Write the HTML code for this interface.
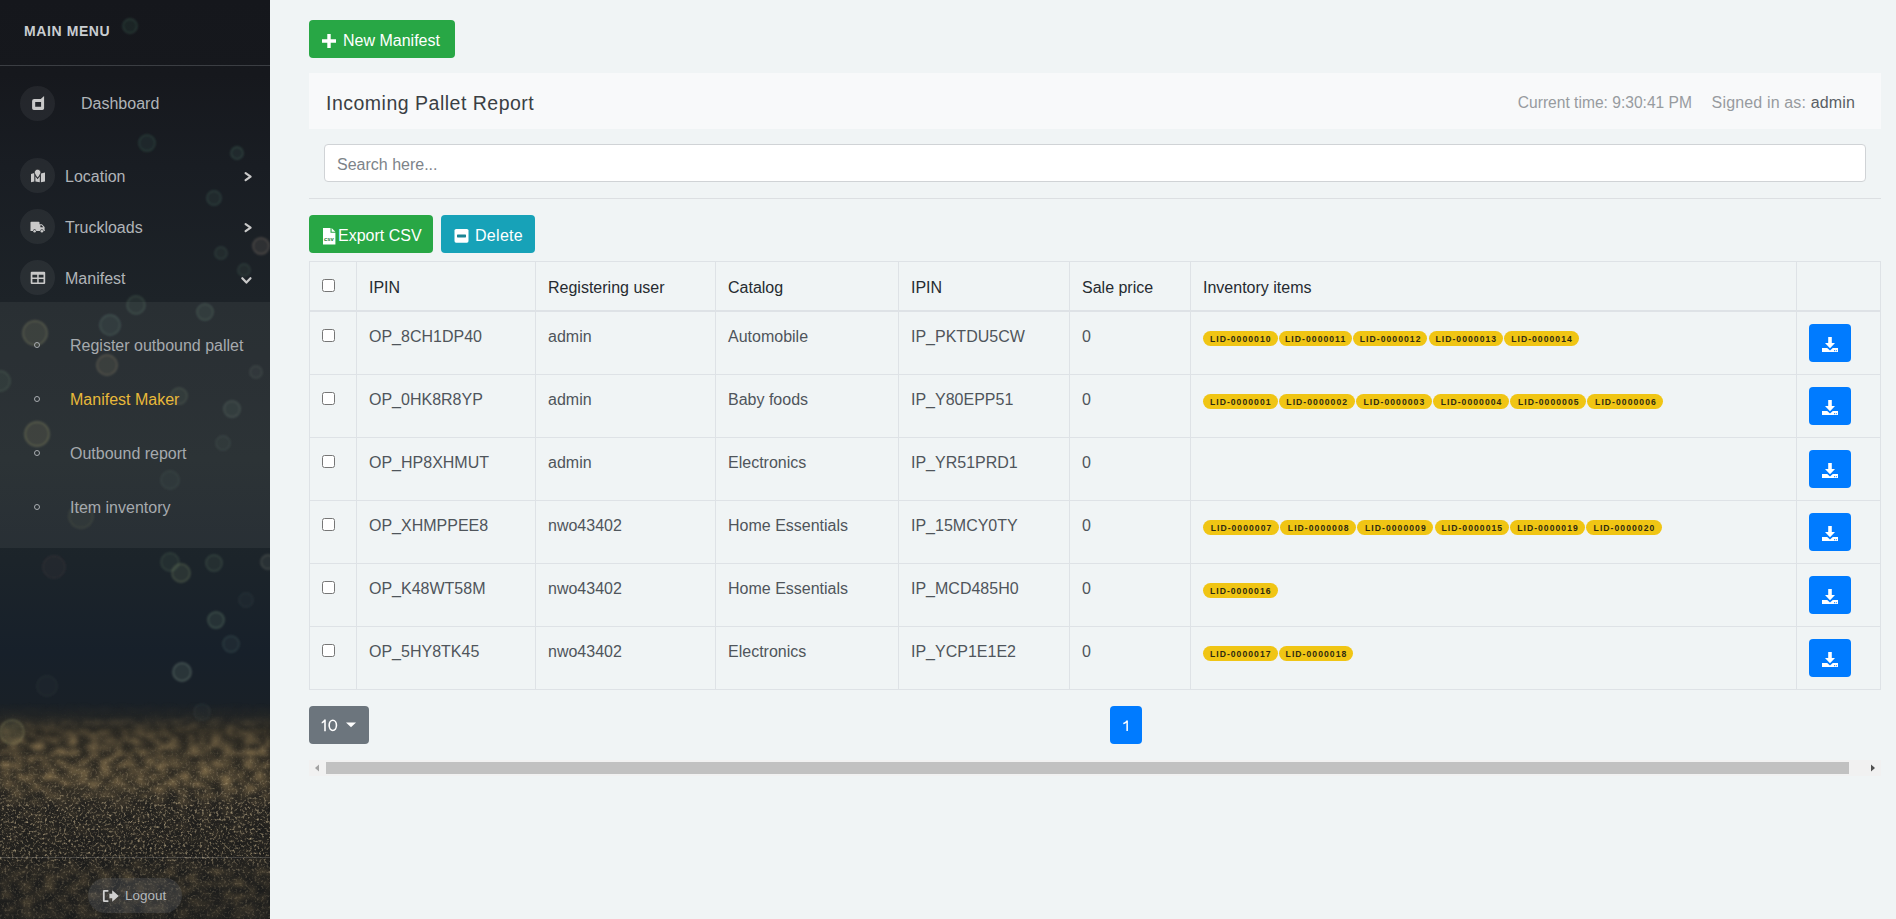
<!DOCTYPE html>
<html><head><meta charset="utf-8">
<style>
*{box-sizing:border-box;margin:0;padding:0}
html,body{width:1896px;height:919px;overflow:hidden}
body{font-family:"Liberation Sans",sans-serif;background:#f0f4f5;position:relative;color:#495057}
.abs{position:absolute}
/* sidebar */
#sb{position:absolute;left:0;top:0;width:270px;height:919px;overflow:hidden;
 background:linear-gradient(180deg,#16181d 0px,#171a1f 120px,#1a1f26 250px,#1f262d 400px,#1d252d 520px,#18202a 620px,#161d26 700px,#2a2820 760px,#3a3222 800px,#2a261e 850px,#1e1d1c 919px);}
#sb .mm{position:absolute;left:24px;top:23px;font-size:14px;font-weight:bold;color:#c9cdd1;letter-spacing:0.6px}
#sb .div1{position:absolute;left:0;top:65px;width:270px;height:1px;background:#3b3e43}
.ic{position:absolute;left:20px;width:35px;height:35px;border-radius:50%;background:rgba(255,255,255,0.06)}
.ic svg{position:absolute;left:10px;top:10px}
.it{position:absolute;font-size:16px;color:#b0b4b8}
.chev{position:absolute;left:243px}
.band{position:absolute;left:0;width:270px}
.sub{position:absolute;left:70px;font-size:16px;color:#a6aaae}
.bul{position:absolute;left:34px;width:6px;height:6px;border:1.3px solid #a9adb1;border-radius:50%}
/* main */
.btn{position:absolute;height:38px;border-radius:4px;color:#fff;font-size:16px}
.btn span{position:absolute}
#hdr{position:absolute;left:309px;top:73px;width:1572px;height:56px;background:#f8f9fa}
#search{position:absolute;left:324px;top:144px;width:1542px;height:38px;background:#fff;border:1px solid #d0d3d6;border-radius:4px}
#hr{position:absolute;left:309px;top:198px;width:1572px;height:1px;background:#dcdfe2}
table{position:absolute;left:309px;top:261px;border-collapse:collapse;table-layout:fixed}
td,th{border:1px solid #dee2e6;vertical-align:top;padding:0;position:relative;text-align:left}
th{height:49px;font-weight:normal;color:#262b30;font-size:16px;border-bottom:2px solid #dee2e6}
td{height:63px;font-size:16px;color:#4f555b}
.cb{position:absolute;left:12px;width:13px;height:13px;border:1px solid #767676;border-radius:2.5px;background:#fff}
.tx{position:absolute;left:12px;white-space:nowrap}
.bdg{display:inline-block;height:15px;border-radius:8px;background:#f0c514;color:#2e2a10;font-size:8.6px;font-weight:bold;letter-spacing:1.05px;line-height:17px;padding:0 0 0 1px;text-align:center;margin-right:1.2px;vertical-align:top}
.bdgs{position:absolute;left:12px;top:19px;white-space:nowrap;font-size:0}
.dl{position:absolute;left:12px;top:12px;width:42px;height:38px;border-radius:4px;background:#007bff}
.dl svg{position:absolute;left:12px;top:12px}
</style></head><body>

<div id="sb">
<svg style="position:absolute;left:0;top:0" width="270" height="919" viewBox="0 0 270 919">
<defs>
<linearGradient id="g0" x1="0" y1="0" x2="0" y2="1">
<stop offset="0" stop-color="#15171c"/>
<stop offset="0.08" stop-color="#16181d"/>
<stop offset="0.18" stop-color="#191d23"/>
<stop offset="0.33" stop-color="#1d2328"/>
<stop offset="0.50" stop-color="#20282b"/>
<stop offset="0.61" stop-color="#1c242a"/>
<stop offset="0.71" stop-color="#17202a"/>
<stop offset="0.765" stop-color="#192027"/>
<stop offset="0.795" stop-color="#292721"/>
<stop offset="0.845" stop-color="#2e2a22"/>
<stop offset="0.875" stop-color="#201f1d"/>
<stop offset="0.93" stop-color="#1c1c1b"/>
<stop offset="1" stop-color="#1a1b1b"/>
</linearGradient>
<filter id="bl" x="-50%" y="-50%" width="200%" height="200%"><feGaussianBlur stdDeviation="1.1"/></filter>
<filter id="nz1" x="0" y="0" width="100%" height="100%">
<feTurbulence type="fractalNoise" baseFrequency="0.09 0.16" numOctaves="2" seed="7"/>
<feColorMatrix type="matrix" values="0 0 0 0 0.43  0 0 0 0 0.29  0 0 0 0 0.12  0 0 0 1.9 -0.70"/><feGaussianBlur stdDeviation="2"/>
</filter>
<filter id="nz2" x="0" y="0" width="100%" height="100%">
<feTurbulence type="fractalNoise" baseFrequency="0.42" numOctaves="2" seed="3"/>
<feColorMatrix type="matrix" values="0 0 0 0 0.5  0 0 0 0 0.40  0 0 0 0 0.24  0 0 0 2.4 -1.22"/><feGaussianBlur stdDeviation="0.55"/>
</filter>
<linearGradient id="gm1" x1="0" y1="0" x2="0" y2="1">
<stop offset="0" stop-color="#fff" stop-opacity="0"/>
<stop offset="0.07" stop-color="#fff" stop-opacity="0.05"/>
<stop offset="0.12" stop-color="#fff" stop-opacity="0.4"/>
<stop offset="0.22" stop-color="#fff" stop-opacity="0.75"/>
<stop offset="0.38" stop-color="#fff" stop-opacity="0.85"/>
<stop offset="0.5" stop-color="#fff" stop-opacity="0.25"/>
<stop offset="0.71" stop-color="#fff" stop-opacity="0.15"/>
<stop offset="0.8" stop-color="#fff" stop-opacity="0.45"/>
<stop offset="1" stop-color="#fff" stop-opacity="0.3"/>
</linearGradient>
<linearGradient id="gm2" x1="0" y1="0" x2="0" y2="1">
<stop offset="0" stop-color="#fff" stop-opacity="0"/>
<stop offset="0.2" stop-color="#fff" stop-opacity="0.1"/>
<stop offset="0.4" stop-color="#fff" stop-opacity="0.5"/>
<stop offset="0.5" stop-color="#fff" stop-opacity="0.95"/>
<stop offset="0.7" stop-color="#fff" stop-opacity="0.9"/>
<stop offset="0.8" stop-color="#fff" stop-opacity="0.4"/>
<stop offset="1" stop-color="#fff" stop-opacity="0.3"/>
</linearGradient>
<mask id="mk1"><rect x="0" y="700" width="270" height="219" fill="url(#gm1)"/></mask>
<mask id="mk2"><rect x="0" y="700" width="270" height="219" fill="url(#gm2)"/></mask>
</defs>
<rect width="270" height="919" fill="url(#g0)"/>
<circle cx="130" cy="26" r="7" fill="#4a7a68" fill-opacity="0.13" stroke="#4a7a68" stroke-opacity="0.32" stroke-width="1.4" filter="url(#bl)"/><circle cx="147" cy="143" r="8" fill="#4a7a68" fill-opacity="0.12" stroke="#4a7a68" stroke-opacity="0.30" stroke-width="1.4" filter="url(#bl)"/><circle cx="237" cy="153" r="6" fill="#5a8a78" fill-opacity="0.12" stroke="#5a8a78" stroke-opacity="0.30" stroke-width="1.4" filter="url(#bl)"/><circle cx="214" cy="198" r="7" fill="#5a8a78" fill-opacity="0.11" stroke="#5a8a78" stroke-opacity="0.28" stroke-width="1.4" filter="url(#bl)"/><circle cx="261" cy="246" r="8" fill="#a09080" fill-opacity="0.14" stroke="#a09080" stroke-opacity="0.35" stroke-width="1.4" filter="url(#bl)"/><circle cx="221" cy="253" r="6" fill="#5a8070" fill-opacity="0.10" stroke="#5a8070" stroke-opacity="0.25" stroke-width="1.4" filter="url(#bl)"/><circle cx="244" cy="270" r="6" fill="#5a8070" fill-opacity="0.10" stroke="#5a8070" stroke-opacity="0.25" stroke-width="1.4" filter="url(#bl)"/><circle cx="205" cy="312" r="8" fill="#6a9078" fill-opacity="0.12" stroke="#6a9078" stroke-opacity="0.30" stroke-width="1.4" filter="url(#bl)"/><circle cx="136" cy="305" r="9" fill="#6a9078" fill-opacity="0.11" stroke="#6a9078" stroke-opacity="0.28" stroke-width="1.4" filter="url(#bl)"/><circle cx="35" cy="333" r="12" fill="#a0a070" fill-opacity="0.14" stroke="#a0a070" stroke-opacity="0.35" stroke-width="1.4" filter="url(#bl)"/><circle cx="110" cy="325" r="10" fill="#6a9080" fill-opacity="0.12" stroke="#6a9080" stroke-opacity="0.30" stroke-width="1.4" filter="url(#bl)"/><circle cx="107" cy="365" r="10" fill="#a09070" fill-opacity="0.13" stroke="#a09070" stroke-opacity="0.32" stroke-width="1.4" filter="url(#bl)"/><circle cx="232" cy="409" r="8" fill="#7a9080" fill-opacity="0.11" stroke="#7a9080" stroke-opacity="0.28" stroke-width="1.4" filter="url(#bl)"/><circle cx="37" cy="434" r="12" fill="#a09a68" fill-opacity="0.15" stroke="#a09a68" stroke-opacity="0.38" stroke-width="1.4" filter="url(#bl)"/><circle cx="179" cy="396" r="8" fill="#7a8a70" fill-opacity="0.10" stroke="#7a8a70" stroke-opacity="0.25" stroke-width="1.4" filter="url(#bl)"/><circle cx="256" cy="372" r="6" fill="#707a70" fill-opacity="0.09" stroke="#707a70" stroke-opacity="0.22" stroke-width="1.4" filter="url(#bl)"/><circle cx="0" cy="381" r="10" fill="#708a70" fill-opacity="0.10" stroke="#708a70" stroke-opacity="0.25" stroke-width="1.4" filter="url(#bl)"/><circle cx="170" cy="480" r="9" fill="#6a7a70" fill-opacity="0.07" stroke="#6a7a70" stroke-opacity="0.18" stroke-width="1.4" filter="url(#bl)"/><circle cx="81" cy="516" r="12" fill="#8a8a60" fill-opacity="0.07" stroke="#8a8a60" stroke-opacity="0.18" stroke-width="1.4" filter="url(#bl)"/><circle cx="223" cy="443" r="7" fill="#6a7a70" fill-opacity="0.08" stroke="#6a7a70" stroke-opacity="0.20" stroke-width="1.4" filter="url(#bl)"/><circle cx="170" cy="562" r="9" fill="#6a8a70" fill-opacity="0.10" stroke="#6a8a70" stroke-opacity="0.25" stroke-width="1.4" filter="url(#bl)"/><circle cx="181" cy="573" r="9" fill="#8a9a70" fill-opacity="0.14" stroke="#8a9a70" stroke-opacity="0.35" stroke-width="1.4" filter="url(#bl)"/><circle cx="214" cy="563" r="8" fill="#6a8a70" fill-opacity="0.11" stroke="#6a8a70" stroke-opacity="0.28" stroke-width="1.4" filter="url(#bl)"/><circle cx="268" cy="562" r="7" fill="#8a9080" fill-opacity="0.12" stroke="#8a9080" stroke-opacity="0.30" stroke-width="1.4" filter="url(#bl)"/><circle cx="54" cy="567" r="11" fill="#806060" fill-opacity="0.06" stroke="#806060" stroke-opacity="0.15" stroke-width="1.4" filter="url(#bl)"/><circle cx="216" cy="620" r="8" fill="#7a9a80" fill-opacity="0.14" stroke="#7a9a80" stroke-opacity="0.35" stroke-width="1.4" filter="url(#bl)"/><circle cx="231" cy="644" r="8" fill="#5a7a78" fill-opacity="0.11" stroke="#5a7a78" stroke-opacity="0.28" stroke-width="1.4" filter="url(#bl)"/><circle cx="182" cy="672" r="9" fill="#8aa090" fill-opacity="0.16" stroke="#8aa090" stroke-opacity="0.40" stroke-width="1.4" filter="url(#bl)"/><circle cx="246" cy="600" r="7" fill="#607070" fill-opacity="0.06" stroke="#607070" stroke-opacity="0.15" stroke-width="1.4" filter="url(#bl)"/><circle cx="202" cy="712" r="8" fill="#607070" fill-opacity="0.06" stroke="#607070" stroke-opacity="0.15" stroke-width="1.4" filter="url(#bl)"/><circle cx="47" cy="686" r="10" fill="#607060" fill-opacity="0.05" stroke="#607060" stroke-opacity="0.12" stroke-width="1.4" filter="url(#bl)"/><circle cx="12" cy="732" r="12" fill="#a0a070" fill-opacity="0.14" stroke="#a0a070" stroke-opacity="0.35" stroke-width="1.4" filter="url(#bl)"/>
<rect x="0" y="700" width="270" height="219" filter="url(#nz1)" mask="url(#mk1)"/>
<rect x="0" y="700" width="270" height="219" filter="url(#nz2)" mask="url(#mk2)"/>
</svg>
  <div class="mm">MAIN MENU</div>
  <div class="div1"></div>

  <div class="ic" style="top:86px;left:20px"><svg style="position:absolute;left:0;top:0" width="35" height="35" viewBox="20 86 35 35"><path fill="#c9c9c9" fill-rule="evenodd" d="M34.2 99H40.8L44.1 96V108.2Q44.1 110 42.3 110H33.9Q32.1 110 32.1 108.2V101.1Q32.1 99 34.2 99ZM35.2 102.1V106.8H41.1V102.1Z"/></svg></div>
  <div class="it" style="left:81px;top:95px">Dashboard</div>

  <div class="ic" style="top:158px"><svg style="position:absolute;left:0;top:0" width="35" height="35" viewBox="20 158 35 35"><path fill="#c9c9c9" d="M31 174L34.3 172.9V181.6L31 182.3Z M35.4 176.2L37.6 179.2L39.8 176.2V182.3L35.4 181.6Z M40.9 173.4L45 172.6V181.6L40.9 182.3Z"/><path fill="#c9c9c9" stroke="#26282c" stroke-width="0.8" d="M37.6 169.3C39.5 169.3 40.8 170.7 40.8 172.4C40.8 174 39 176.3 37.6 178C36.2 176.3 34.4 174 34.4 172.4C34.4 170.7 35.7 169.3 37.6 169.3Z"/></svg></div>
  <div class="it" style="left:65px;top:168px">Location</div>
  <div class="ic" style="top:209px"><svg style="position:absolute;left:0;top:0" width="35" height="35" viewBox="20 209 35 35"><path fill="#c9c9c9" d="M30.5 222.6Q30.5 221.7 31.4 221.7H38.6Q39.5 221.7 39.5 222.6V224.2H41.9L44.6 227V230.4H45V231H43.6A1.7 1.7 0 0 0 40.2 231H36.3A1.7 1.7 0 0 0 32.9 231H30.5Z"/><circle cx="34.6" cy="231.2" r="1.3" fill="#c9c9c9"/><circle cx="41.9" cy="231.2" r="1.3" fill="#c9c9c9"/><path fill="#26282c" d="M40.4 225.2H41.6L43.4 227.2H40.4Z"/></svg></div>
  <div class="it" style="left:65px;top:219px">Truckloads</div>
  
  <div class="ic" style="top:260px"><svg style="position:absolute;left:0;top:0" width="35" height="35" viewBox="20 260 35 35"><path fill="#c9c9c9" fill-rule="evenodd" d="M31.8 271.7H44.1Q45.2 271.7 45.2 272.8V283Q45.2 284.1 44.1 284.1H31.8Q30.7 284.1 30.7 283V272.8Q30.7 271.7 31.8 271.7Z M32.4 274.8V277.4H37.2V274.8Z M38.7 274.8V277.4H43.5V274.8Z M32.4 279V282.4H37.2V279Z M38.7 279V282.4H43.5V279Z"/></svg></div>
  <div class="it" style="left:65px;top:270px">Manifest</div>

  <svg class="abs" style="left:240px;top:168px" width="16" height="16" viewBox="240 168 16 16"><path fill="none" stroke="#c9c9c9" stroke-width="2.2" stroke-linecap="round" stroke-linejoin="round" d="M245.6 173.2L250.6 176.6L245.6 180.2"/></svg><svg class="abs" style="left:240px;top:219px" width="16" height="16" viewBox="240 219 16 16"><path fill="none" stroke="#c9c9c9" stroke-width="2.2" stroke-linecap="round" stroke-linejoin="round" d="M245.6 224.2L250.6 227.6L245.6 231.2"/></svg><svg class="abs" style="left:238px;top:272px" width="18" height="16" viewBox="238 272 18 16"><path fill="none" stroke="#c9c9c9" stroke-width="2.2" stroke-linecap="round" stroke-linejoin="round" d="M242.3 278.2L246.4 282.6L250.5 278.2"/></svg>
  <div class="band" style="top:302px;height:246px;background:rgba(255,255,255,0.055)"></div>
  <div class="bul" style="top:342px"></div><div class="sub" style="top:337px">Register outbound pallet</div>
  <div class="bul" style="top:396px"></div><div class="sub" style="top:391px;color:#e8b93a">Manifest Maker</div>
  <div class="bul" style="top:450px"></div><div class="sub" style="top:445px">Outbound report</div>
  <div class="bul" style="top:504px"></div><div class="sub" style="top:499px">Item inventory</div>

  <div class="abs" style="left:0;top:857px;width:270px;height:1px;background:rgba(255,255,255,0.16)"></div>
  <div class="abs" style="left:88px;top:878px;width:94px;height:35px;border-radius:18px;background:rgba(120,125,130,0.22)"></div>
  <svg class="abs" style="left:100px;top:886px" width="22" height="20" viewBox="100 886 22 20"><path fill="#d0d0d0" d="M104.2 889.9H108.4V891.7H104.7V900.2H108.4V902H104.2Q102.9 902 102.9 900.7V891.2Q102.9 889.9 104.2 889.9Z M109.4 893.8H112.2V890.2L118.8 896L112.2 901.8V898.2H109.4Z"/></svg><div class="abs" style="left:125px;top:888px;font-size:13.5px;color:#b4b8bc">Logout</div>
</div>

<div class="btn" style="left:309px;top:20px;width:146px;background:#28a745"><svg class="abs" style="left:13px;top:14px" width="14" height="14" viewBox="0 0 14 14"><path fill="#fff" d="M5.3 0H8.7V5.3H14V8.7H8.7V14H5.3V8.7H0V5.3H5.3Z"/></svg><span style="left:34px;top:12px">New Manifest</span></div>

<div id="hdr">
  <div class="abs" style="left:17px;top:19px;font-size:19.5px;letter-spacing:0.5px;color:#3a3f44">Incoming Pallet Report</div>
  <div class="abs" style="right:189px;width:300px;text-align:right;top:21px;font-size:15.6px;color:#979b9f">Current time: 9:30:41 PM</div>
  <div class="abs" style="right:26px;width:300px;text-align:right;top:21px;font-size:16px;color:#979b9f;letter-spacing:0.15px">Signed in as: <span style="color:#5a5f64">admin</span></div>
</div>
<div id="search"><div class="abs" style="left:12px;top:11px;font-size:16px;color:#7d8389">Search here...</div></div>
<div id="hr"></div>

<div class="btn" style="left:309px;top:215px;width:124px;background:#28a745"><svg class="abs" style="left:14px;top:13px" width="13" height="17" viewBox="0 0 13 17"><path fill="#fff" d="M0 0H7.5V4.8H12.4V16.4H0Z M8.6 0L12.4 3.8H8.6Z"/><text x="5.8" y="12.6" font-family="Liberation Sans" font-weight="bold" font-size="5.8" fill="#1f7a35" text-anchor="middle">csv</text></svg><span style="left:29px;top:12px">Export CSV</span></div>
<div class="btn" style="left:441px;top:215px;width:94px;background:#17a2b8"><svg class="abs" style="left:13px;top:14px" width="15" height="14" viewBox="0 0 15 14"><rect x="0.5" y="0" width="14" height="13.7" rx="1.6" fill="#fff"/><rect x="3" y="5.4" width="9" height="3" rx="0.6" fill="#1b8494"/></svg><span style="left:34px;top:12px;letter-spacing:0.3px">Delete</span></div>

<table>
<colgroup><col style="width:47px"><col style="width:179px"><col style="width:180px"><col style="width:183px"><col style="width:171px"><col style="width:121px"><col style="width:606px"><col style="width:84px"></colgroup>
<tr><th><div class="cb" style="top:17px"></div></th><th><div class="tx" style="top:17px">IPIN</div></th><th><div class="tx" style="top:17px">Registering user</div></th><th><div class="tx" style="top:17px">Catalog</div></th><th><div class="tx" style="top:17px">IPIN</div></th><th><div class="tx" style="top:17px">Sale price</div></th><th><div class="tx" style="top:17px">Inventory items</div></th><th></th></tr>
<!--ROWS-->
<tr style="height:64px"><td><div class="cb" style="top:17px"></div></td><td><div class="tx" style="top:16px">OP_8CH1DP40</div></td><td><div class="tx" style="top:16px">admin</div></td><td><div class="tx" style="top:16px">Automobile</div></td><td><div class="tx" style="top:16px">IP_PKTDU5CW</div></td><td><div class="tx" style="top:16px">0</div></td><td><div class="bdgs"><span class="bdg" style="width:74.5px">LID-0000010</span><span class="bdg" style="width:73.0px">LID-0000011</span><span class="bdg" style="width:74.5px">LID-0000012</span><span class="bdg" style="width:74.5px">LID-0000013</span><span class="bdg" style="width:74.5px">LID-0000014</span></div></td><td><div class="dl"><svg width="18" height="16" viewBox="0 0 18 16"><path fill="#fff" d="M7.2 1h3.6v6h3.2L9 12.2 4 7h3.2z"/><path fill="#fff" d="M1 12h5.2L9 14.6 11.8 12H17v5H1z"/><rect x="13" y="14.2" width="1" height="1" fill="#007bff"/><rect x="14.8" y="14.2" width="1" height="1" fill="#007bff"/></svg></div></td></tr>
<tr><td><div class="cb" style="top:17px"></div></td><td><div class="tx" style="top:16px">OP_0HK8R8YP</div></td><td><div class="tx" style="top:16px">admin</div></td><td><div class="tx" style="top:16px">Baby foods</div></td><td><div class="tx" style="top:16px">IP_Y80EPP51</div></td><td><div class="tx" style="top:16px">0</div></td><td><div class="bdgs"><span class="bdg" style="width:74.5px">LID-0000001</span><span class="bdg" style="width:76.0px">LID-0000002</span><span class="bdg" style="width:76.0px">LID-0000003</span><span class="bdg" style="width:76.0px">LID-0000004</span><span class="bdg" style="width:76.0px">LID-0000005</span><span class="bdg" style="width:76.0px">LID-0000006</span></div></td><td><div class="dl"><svg width="18" height="16" viewBox="0 0 18 16"><path fill="#fff" d="M7.2 1h3.6v6h3.2L9 12.2 4 7h3.2z"/><path fill="#fff" d="M1 12h5.2L9 14.6 11.8 12H17v5H1z"/><rect x="13" y="14.2" width="1" height="1" fill="#007bff"/><rect x="14.8" y="14.2" width="1" height="1" fill="#007bff"/></svg></div></td></tr>
<tr><td><div class="cb" style="top:17px"></div></td><td><div class="tx" style="top:16px">OP_HP8XHMUT</div></td><td><div class="tx" style="top:16px">admin</div></td><td><div class="tx" style="top:16px">Electronics</div></td><td><div class="tx" style="top:16px">IP_YR51PRD1</div></td><td><div class="tx" style="top:16px">0</div></td><td><div class="bdgs"></div></td><td><div class="dl"><svg width="18" height="16" viewBox="0 0 18 16"><path fill="#fff" d="M7.2 1h3.6v6h3.2L9 12.2 4 7h3.2z"/><path fill="#fff" d="M1 12h5.2L9 14.6 11.8 12H17v5H1z"/><rect x="13" y="14.2" width="1" height="1" fill="#007bff"/><rect x="14.8" y="14.2" width="1" height="1" fill="#007bff"/></svg></div></td></tr>
<tr><td><div class="cb" style="top:17px"></div></td><td><div class="tx" style="top:16px">OP_XHMPPEE8</div></td><td><div class="tx" style="top:16px">nwo43402</div></td><td><div class="tx" style="top:16px">Home Essentials</div></td><td><div class="tx" style="top:16px">IP_15MCY0TY</div></td><td><div class="tx" style="top:16px">0</div></td><td><div class="bdgs"><span class="bdg" style="width:76.0px">LID-0000007</span><span class="bdg" style="width:76.0px">LID-0000008</span><span class="bdg" style="width:76.0px">LID-0000009</span><span class="bdg" style="width:74.5px">LID-0000015</span><span class="bdg" style="width:74.5px">LID-0000019</span><span class="bdg" style="width:76.0px">LID-0000020</span></div></td><td><div class="dl"><svg width="18" height="16" viewBox="0 0 18 16"><path fill="#fff" d="M7.2 1h3.6v6h3.2L9 12.2 4 7h3.2z"/><path fill="#fff" d="M1 12h5.2L9 14.6 11.8 12H17v5H1z"/><rect x="13" y="14.2" width="1" height="1" fill="#007bff"/><rect x="14.8" y="14.2" width="1" height="1" fill="#007bff"/></svg></div></td></tr>
<tr><td><div class="cb" style="top:17px"></div></td><td><div class="tx" style="top:16px">OP_K48WT58M</div></td><td><div class="tx" style="top:16px">nwo43402</div></td><td><div class="tx" style="top:16px">Home Essentials</div></td><td><div class="tx" style="top:16px">IP_MCD485H0</div></td><td><div class="tx" style="top:16px">0</div></td><td><div class="bdgs"><span class="bdg" style="width:74.5px">LID-0000016</span></div></td><td><div class="dl"><svg width="18" height="16" viewBox="0 0 18 16"><path fill="#fff" d="M7.2 1h3.6v6h3.2L9 12.2 4 7h3.2z"/><path fill="#fff" d="M1 12h5.2L9 14.6 11.8 12H17v5H1z"/><rect x="13" y="14.2" width="1" height="1" fill="#007bff"/><rect x="14.8" y="14.2" width="1" height="1" fill="#007bff"/></svg></div></td></tr>
<tr><td><div class="cb" style="top:17px"></div></td><td><div class="tx" style="top:16px">OP_5HY8TK45</div></td><td><div class="tx" style="top:16px">nwo43402</div></td><td><div class="tx" style="top:16px">Electronics</div></td><td><div class="tx" style="top:16px">IP_YCP1E1E2</div></td><td><div class="tx" style="top:16px">0</div></td><td><div class="bdgs"><span class="bdg" style="width:74.5px">LID-0000017</span><span class="bdg" style="width:74.5px">LID-0000018</span></div></td><td><div class="dl"><svg width="18" height="16" viewBox="0 0 18 16"><path fill="#fff" d="M7.2 1h3.6v6h3.2L9 12.2 4 7h3.2z"/><path fill="#fff" d="M1 12h5.2L9 14.6 11.8 12H17v5H1z"/><rect x="13" y="14.2" width="1" height="1" fill="#007bff"/><rect x="14.8" y="14.2" width="1" height="1" fill="#007bff"/></svg></div></td></tr>
<!--/ROWS-->
</table>

<div class="btn" style="left:309px;top:706px;width:60px;background:#6c757d"><svg class="abs" style="left:0;top:0" width="60" height="38" viewBox="309 706 60 38"><path fill="#fff" d="M324.2 719.5H325.8V731.2H324.2V722.1Q323.1 723.1 321.7 723.6V722Q323.4 721.3 324.2 719.5Z"/><ellipse cx="332.8" cy="725.35" rx="3.65" ry="5.1" fill="none" stroke="#fff" stroke-width="1.6"/></svg><svg class="abs" style="left:37px;top:16px" width="10" height="6" viewBox="0 0 10 6"><path fill="#fff" d="M0 0.5H10L5 5.2Z"/></svg></div>
<div class="btn" style="left:1110px;top:706px;width:32px;background:#007bff"><svg class="abs" style="left:0;top:0" width="32" height="38" viewBox="1110 706 32 38"><path fill="#fff" d="M1126.4 720.4H1127.9V731H1126.4V722.7Q1125.2 723.7 1123.3 724.2V722.7Q1125.4 722 1126.4 720.4Z"/></svg></div>

<div class="abs" style="left:309px;top:760px;width:1572px;height:16px;background:#f1f1f1"></div>
<div class="abs" style="left:326px;top:762px;width:1523px;height:12px;background:#c1c1c1"></div>
<svg class="abs" style="left:309px;top:760px" width="16" height="16"><path d="M10 4.5V11.5L6 8Z" fill="#a3a3a3"/></svg>
<svg class="abs" style="left:1865px;top:760px" width="16" height="16"><path d="M6 4.5V11.5L10 8Z" fill="#505050"/></svg>
</body></html>
